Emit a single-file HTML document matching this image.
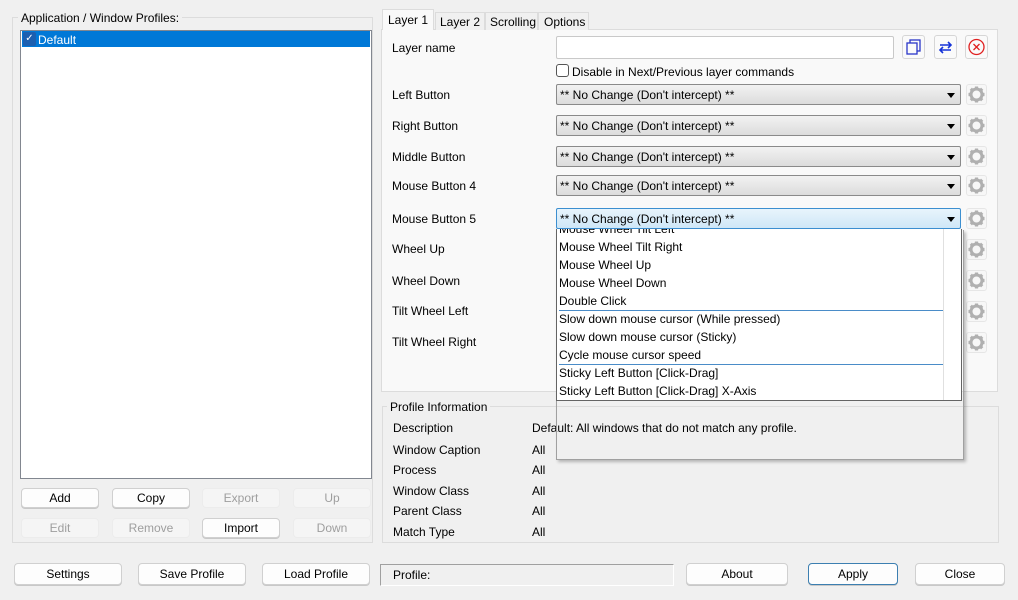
<!DOCTYPE html>
<html><head><meta charset="utf-8"><style>
*{box-sizing:border-box}
body{margin:0;width:1018px;height:600px;background:#f0f0f0;font-family:"Liberation Sans",sans-serif;font-size:12px;color:#000;position:relative;overflow:hidden}
.a{position:absolute}
.t{position:absolute;white-space:nowrap;line-height:14px;margin-top:1px}
.btn{position:absolute;background:#fdfdfd;border:1px solid #d0d0d0;border-radius:4px;text-align:center;line-height:19px;box-shadow:0 1px 0 #c8c8c8}
.dis{background:#f5f5f5;color:#9e9e9e;box-shadow:none;border-color:#ececec}
.combo{position:absolute;left:556px;width:405px;height:21px;border:1px solid #8a8a8a;border-radius:2px;background:linear-gradient(#f2f2f2,#dcdcdc);padding-left:3px;line-height:20px}
.combo:after{content:"";position:absolute;right:5px;top:8px;border-left:4px solid transparent;border-right:4px solid transparent;border-top:5px solid #000}
.gear{position:absolute;left:966px;width:21px;height:21px;border:1px solid #e6e6e6;border-radius:3px;background:#f7f7f7}
.li{position:absolute;left:2px;height:18px;line-height:19px}
</style></head><body>
<div class="a" style="left:12px;top:17px;width:361px;height:526px;border:1px solid #dcdcdc"></div>
<div class="t" style="left:18px;top:10px;background:#f0f0f0;padding:0 3px">Application / Window Profiles:</div>
<div class="a" style="left:20px;top:30px;width:352px;height:449px;background:#fff;border:1px solid #828790"></div>
<div class="a" style="left:22px;top:31px;width:348px;height:16px;background:#0078d7"></div>
<div class="a" style="left:23px;top:32px;width:13px;height:14px;background:#1c5fb0;border-radius:2px;color:#fff;font-size:10px;line-height:14px;text-align:center">✓</div>
<div class="t" style="left:38px;top:32px;color:#fff">Default</div>
<div class="btn" style="left:21px;top:488px;width:78px;height:20px">Add</div>
<div class="btn" style="left:112px;top:488px;width:78px;height:20px">Copy</div>
<div class="btn dis" style="left:202px;top:488px;width:78px;height:20px">Export</div>
<div class="btn dis" style="left:293px;top:488px;width:78px;height:20px">Up</div>
<div class="btn dis" style="left:21px;top:518px;width:78px;height:20px">Edit</div>
<div class="btn dis" style="left:112px;top:518px;width:78px;height:20px">Remove</div>
<div class="btn" style="left:202px;top:518px;width:78px;height:20px">Import</div>
<div class="btn dis" style="left:293px;top:518px;width:78px;height:20px">Down</div>

<div class="a" style="left:381px;top:29px;width:617px;height:363px;background:#f9f9f9;border:1px solid #dcdcdc"></div>
<div class="a" style="left:382px;top:9px;width:52px;height:21px;background:#f9f9f9;border:1px solid #dcdcdc;border-bottom:none"></div>
<div class="t" style="left:388px;top:12px">Layer 1</div>
<div class="a" style="left:435px;top:12px;width:50px;height:18px;border:1px solid #dcdcdc;border-bottom:none;background:#f0f0f0"></div>
<div class="t" style="left:440px;top:14px">Layer 2</div>
<div class="a" style="left:485px;top:12px;width:53px;height:18px;border:1px solid #dcdcdc;border-bottom:none;background:#f0f0f0"></div>
<div class="t" style="left:490px;top:14px">Scrolling</div>
<div class="a" style="left:538px;top:12px;width:51px;height:18px;border:1px solid #dcdcdc;border-bottom:none;background:#f0f0f0"></div>
<div class="t" style="left:544px;top:14px">Options</div>

<div class="t" style="left:392px;top:40px">Layer name</div>
<div class="a" style="left:556px;top:36px;width:338px;height:23px;background:#fff;border:1px solid #c9c9c9;border-radius:2px"></div>
<div class="a" style="left:902px;top:35px;width:23px;height:24px;border:1px solid #d6d6d6;border-radius:3px;background:#fafafa">
<svg width="21" height="22"><rect x="7" y="4" width="10" height="11" fill="none" stroke="#2a36c8" stroke-width="1.3"/><rect x="4" y="7" width="10" height="11" fill="#fafafa" stroke="#2a36c8" stroke-width="1.3"/></svg></div>
<div class="a" style="left:934px;top:35px;width:23px;height:24px;border:1px solid #d6d6d6;border-radius:3px;background:#fafafa">
<svg width="21" height="22"><path d="M5 9H16M13 6l3 3-3 3M16 14H5M8 11l-3 3 3 3" fill="none" stroke="#1533d8" stroke-width="1.6"/></svg></div>
<div class="a" style="left:965px;top:35px;width:23px;height:24px;border:1px solid #d6d6d6;border-radius:3px;background:#fafafa">
<svg width="21" height="22"><circle cx="10.5" cy="11" r="7.5" fill="none" stroke="#e02020" stroke-width="1.3"/><path d="M7.5 8l6 6M13.5 8l-6 6" stroke="#e02020" stroke-width="1.3"/></svg></div>
<div class="a" style="left:556px;top:64px;width:13px;height:13px;border:1px solid #555;border-radius:3px;background:#fff"></div>
<div class="t" style="left:572px;top:64px">Disable in Next/Previous layer commands</div>

<div class="t" style="left:392px;top:87px">Left Button</div>
<div class="t" style="left:392px;top:118px">Right Button</div>
<div class="t" style="left:392px;top:149px">Middle Button</div>
<div class="t" style="left:392px;top:178px">Mouse Button 4</div>
<div class="t" style="left:392px;top:211px">Mouse Button 5</div>
<div class="t" style="left:392px;top:241px">Wheel Up</div>
<div class="t" style="left:392px;top:273px">Wheel Down</div>
<div class="t" style="left:392px;top:303px">Tilt Wheel Left</div>
<div class="t" style="left:392px;top:334px">Tilt Wheel Right</div>

<div class="combo" style="top:84px">** No Change (Don't intercept) **</div>
<div class="combo" style="top:115px">** No Change (Don't intercept) **</div>
<div class="combo" style="top:146px">** No Change (Don't intercept) **</div>
<div class="combo" style="top:175px">** No Change (Don't intercept) **</div>
<div class="combo" style="top:208px;border-color:#3c8fd0;background:linear-gradient(#e8f4fc,#cfe7f7)">** No Change (Don't intercept) **</div>

<svg width="0" height="0" style="position:absolute"><defs><g id="g"><circle cx="10" cy="10" r="5.5" fill="none" stroke="#b0b0b0" stroke-width="3"/><g stroke="#b0b0b0" stroke-width="3.2"><path d="M10 2v3M10 15v3M2 10h3M15 10h3M4.3 4.3l2.1 2.1M13.6 13.6l2.1 2.1M4.3 15.7l2.1-2.1M13.6 6.4l2.1-2.1"/></g></g></defs></svg>
<div class="gear" style="top:84px"><svg width="19" height="19"><use href="#g" transform="translate(-0.5,-0.5)"/></svg></div>
<div class="gear" style="top:115px"><svg width="19" height="19"><use href="#g" transform="translate(-0.5,-0.5)"/></svg></div>
<div class="gear" style="top:146px"><svg width="19" height="19"><use href="#g" transform="translate(-0.5,-0.5)"/></svg></div>
<div class="gear" style="top:175px"><svg width="19" height="19"><use href="#g" transform="translate(-0.5,-0.5)"/></svg></div>
<div class="gear" style="top:208px"><svg width="19" height="19"><use href="#g" transform="translate(-0.5,-0.5)"/></svg></div>
<div class="gear" style="top:239px"><svg width="19" height="19"><use href="#g" transform="translate(-0.5,-0.5)"/></svg></div>
<div class="gear" style="top:270px"><svg width="19" height="19"><use href="#g" transform="translate(-0.5,-0.5)"/></svg></div>
<div class="gear" style="top:301px"><svg width="19" height="19"><use href="#g" transform="translate(-0.5,-0.5)"/></svg></div>
<div class="gear" style="top:332px"><svg width="19" height="19"><use href="#g" transform="translate(-0.5,-0.5)"/></svg></div>

<div class="a" style="left:382px;top:406px;width:617px;height:137px;border:1px solid #dcdcdc"></div>
<div class="t" style="left:387px;top:399px;background:#f0f0f0;padding:0 3px">Profile Information</div>
<div class="t" style="left:393px;top:420px">Description</div><div class="t" style="left:532px;top:420px">Default: All windows that do not match any profile.</div>
<div class="t" style="left:393px;top:442px">Window Caption</div><div class="t" style="left:532px;top:442px">All</div>
<div class="t" style="left:393px;top:462px">Process</div><div class="t" style="left:532px;top:462px">All</div>
<div class="t" style="left:393px;top:483px">Window Class</div><div class="t" style="left:532px;top:483px">All</div>
<div class="t" style="left:393px;top:503px">Parent Class</div><div class="t" style="left:532px;top:503px">All</div>
<div class="t" style="left:393px;top:524px">Match Type</div><div class="t" style="left:532px;top:524px">All</div>

<div class="a" style="left:556px;top:230px;width:408px;height:230px;border:1px solid #a0a0a0;border-top:none;box-shadow:2px 2px 3px rgba(0,0,0,0.25)"></div>
<div class="a" style="left:556px;top:229px;width:406px;height:172px;background:#fff;border:1px solid #646464;border-top:none;overflow:hidden">
<div class="a" style="left:386px;top:0;width:1px;height:172px;background:#e0e0e0"></div>
<div class="li" style="top:-9px">Mouse Wheel Tilt Left</div>
<div class="li" style="top:9px">Mouse Wheel Tilt Right</div>
<div class="li" style="top:27px">Mouse Wheel Up</div>
<div class="li" style="top:45px">Mouse Wheel Down</div>
<div class="li" style="top:63px">Double Click</div>
<div class="a" style="left:2px;top:81px;width:384px;height:1px;background:#4a8cc8"></div>
<div class="li" style="top:81px">Slow down mouse cursor (While pressed)</div>
<div class="li" style="top:99px">Slow down mouse cursor (Sticky)</div>
<div class="li" style="top:117px">Cycle mouse cursor speed</div>
<div class="a" style="left:2px;top:135px;width:384px;height:1px;background:#4a8cc8"></div>
<div class="li" style="top:135px">Sticky Left Button [Click-Drag]</div>
<div class="li" style="top:153px">Sticky Left Button [Click-Drag] X-Axis</div>
</div>

<div class="btn" style="left:14px;top:563px;width:108px;height:22px;line-height:21px">Settings</div>
<div class="btn" style="left:138px;top:563px;width:108px;height:22px;line-height:21px">Save Profile</div>
<div class="btn" style="left:262px;top:563px;width:108px;height:22px;line-height:21px">Load Profile</div>
<div class="a" style="left:380px;top:564px;width:294px;height:22px;border:1px solid #a0a0a0;border-right-color:#fff;border-bottom-color:#fff;padding-left:12px;line-height:21px">Profile:</div>
<div class="btn" style="left:686px;top:563px;width:102px;height:22px;line-height:21px">About</div>
<div class="btn" style="left:808px;top:563px;width:90px;height:22px;line-height:21px;border-color:#3c7fb1">Apply</div>
<div class="btn" style="left:915px;top:563px;width:90px;height:22px;line-height:21px">Close</div>
</body></html>
